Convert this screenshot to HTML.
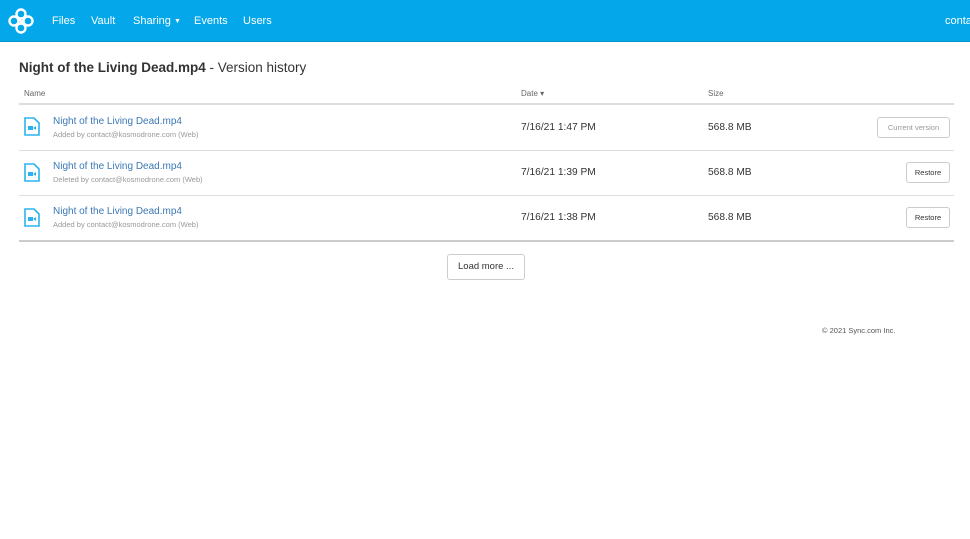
<!DOCTYPE html>
<html><head><meta charset="utf-8"><style>
body{margin:0;width:970px;height:539px;background:#fff;font-family:"Liberation Sans",sans-serif;overflow:hidden;position:relative;color:#333}
.nav{position:absolute;left:0;top:0;width:970px;height:41px;background:#04a8ea;border-bottom:1px solid #0391c9}
.nav a{position:absolute;top:15px;color:#fff;font-size:11px;line-height:13px}
h1{position:absolute;left:19px;top:60px;margin:0;font-size:13.5px;font-weight:normal;color:#333}
h1 b{font-weight:bold}
.hdr{position:absolute;top:89px;font-size:8px;color:#666}
.line{position:absolute;left:19px;width:935px;height:1px;background:#ddd}
.t{position:absolute;font-size:10.2px;color:#333}
.fn{position:absolute;left:53px;font-size:10px;color:#3a78b5}
.sub{position:absolute;left:53px;font-size:7.5px;color:#999}
.btn{position:absolute;border:1px solid #ccc;border-radius:3px;font-size:7.5px;color:#333;text-align:center;box-sizing:border-box;background:#fff}
.ic{position:absolute;left:24px}
</style></head><body>
<div class="nav">
<svg style="position:absolute;left:8px;top:8px" width="26" height="26" viewBox="0 0 26 26" fill="none" stroke="#fff" stroke-width="2.4"><circle cx="13" cy="6" r="4.5"/><circle cx="13" cy="20" r="4.5"/><circle cx="6" cy="13" r="4.5"/><circle cx="20" cy="13" r="4.5"/><path d="M9 9l8 8"/></svg>
<a style="left:52px">Files</a><a style="left:91px">Vault</a><a style="left:133px">Sharing <span style="font-size:7px;vertical-align:1px">▼</span></a><a style="left:194px">Events</a><a style="left:243px">Users</a><a style="left:945px">conta</a>
</div>
<h1><b>Night of the Living Dead.mp4</b> - Version history</h1>
<div class="hdr" style="left:24px">Name</div><div class="hdr" style="left:521px">Date ▾</div><div class="hdr" style="left:708px">Size</div>
<div class="line" style="top:103px;height:2px"></div>
<div class="line" style="top:150px"></div>
<div class="line" style="top:195px"></div>
<div class="line" style="top:240px;height:2px;background:#ccc"></div>

<svg class="ic" style="top:117px" width="16" height="19" viewBox="0 0 16 19"><path d="M1 1h9l5 5v12H1z" fill="#fff" stroke="#2bb3ef" stroke-width="1.6"/><path d="M4 9h5v4H4zM9 11l3-2v4z" fill="#2bb3ef"/></svg>
<div class="fn" style="top:116px">Night of the Living Dead.mp4</div><div class="sub" style="top:130px">Added by contact@kosmodrone.com (Web)</div>
<div class="t" style="left:521px;top:122px">7/16/21 1:47 PM</div><div class="t" style="left:708px;top:122px">568.8 MB</div>
<div class="btn" style="left:877px;top:117px;width:73px;height:21px;line-height:19px;color:#999">Current version</div>

<svg class="ic" style="top:163px" width="16" height="19" viewBox="0 0 16 19"><path d="M1 1h9l5 5v12H1z" fill="#fff" stroke="#2bb3ef" stroke-width="1.6"/><path d="M4 9h5v4H4zM9 11l3-2v4z" fill="#2bb3ef"/></svg>
<div class="fn" style="top:161px">Night of the Living Dead.mp4</div><div class="sub" style="top:175px">Deleted by contact@kosmodrone.com (Web)</div>
<div class="t" style="left:521px;top:167px">7/16/21 1:39 PM</div><div class="t" style="left:708px;top:167px">568.8 MB</div>
<div class="btn" style="left:906px;top:162px;width:44px;height:21px;line-height:19px">Restore</div>

<svg class="ic" style="top:208px" width="16" height="19" viewBox="0 0 16 19"><path d="M1 1h9l5 5v12H1z" fill="#fff" stroke="#2bb3ef" stroke-width="1.6"/><path d="M4 9h5v4H4zM9 11l3-2v4z" fill="#2bb3ef"/></svg>
<div class="fn" style="top:206px">Night of the Living Dead.mp4</div><div class="sub" style="top:220px">Added by contact@kosmodrone.com (Web)</div>
<div class="t" style="left:521px;top:212px">7/16/21 1:38 PM</div><div class="t" style="left:708px;top:212px">568.8 MB</div>
<div class="btn" style="left:906px;top:207px;width:44px;height:21px;line-height:19px">Restore</div>

<div class="btn" style="left:447px;top:254px;width:78px;height:26px;line-height:24px;font-size:9.5px">Load more ...</div>
<div style="position:absolute;left:822px;top:326px;font-size:7.5px;color:#555">© 2021 Sync.com Inc.</div>
</body></html>
